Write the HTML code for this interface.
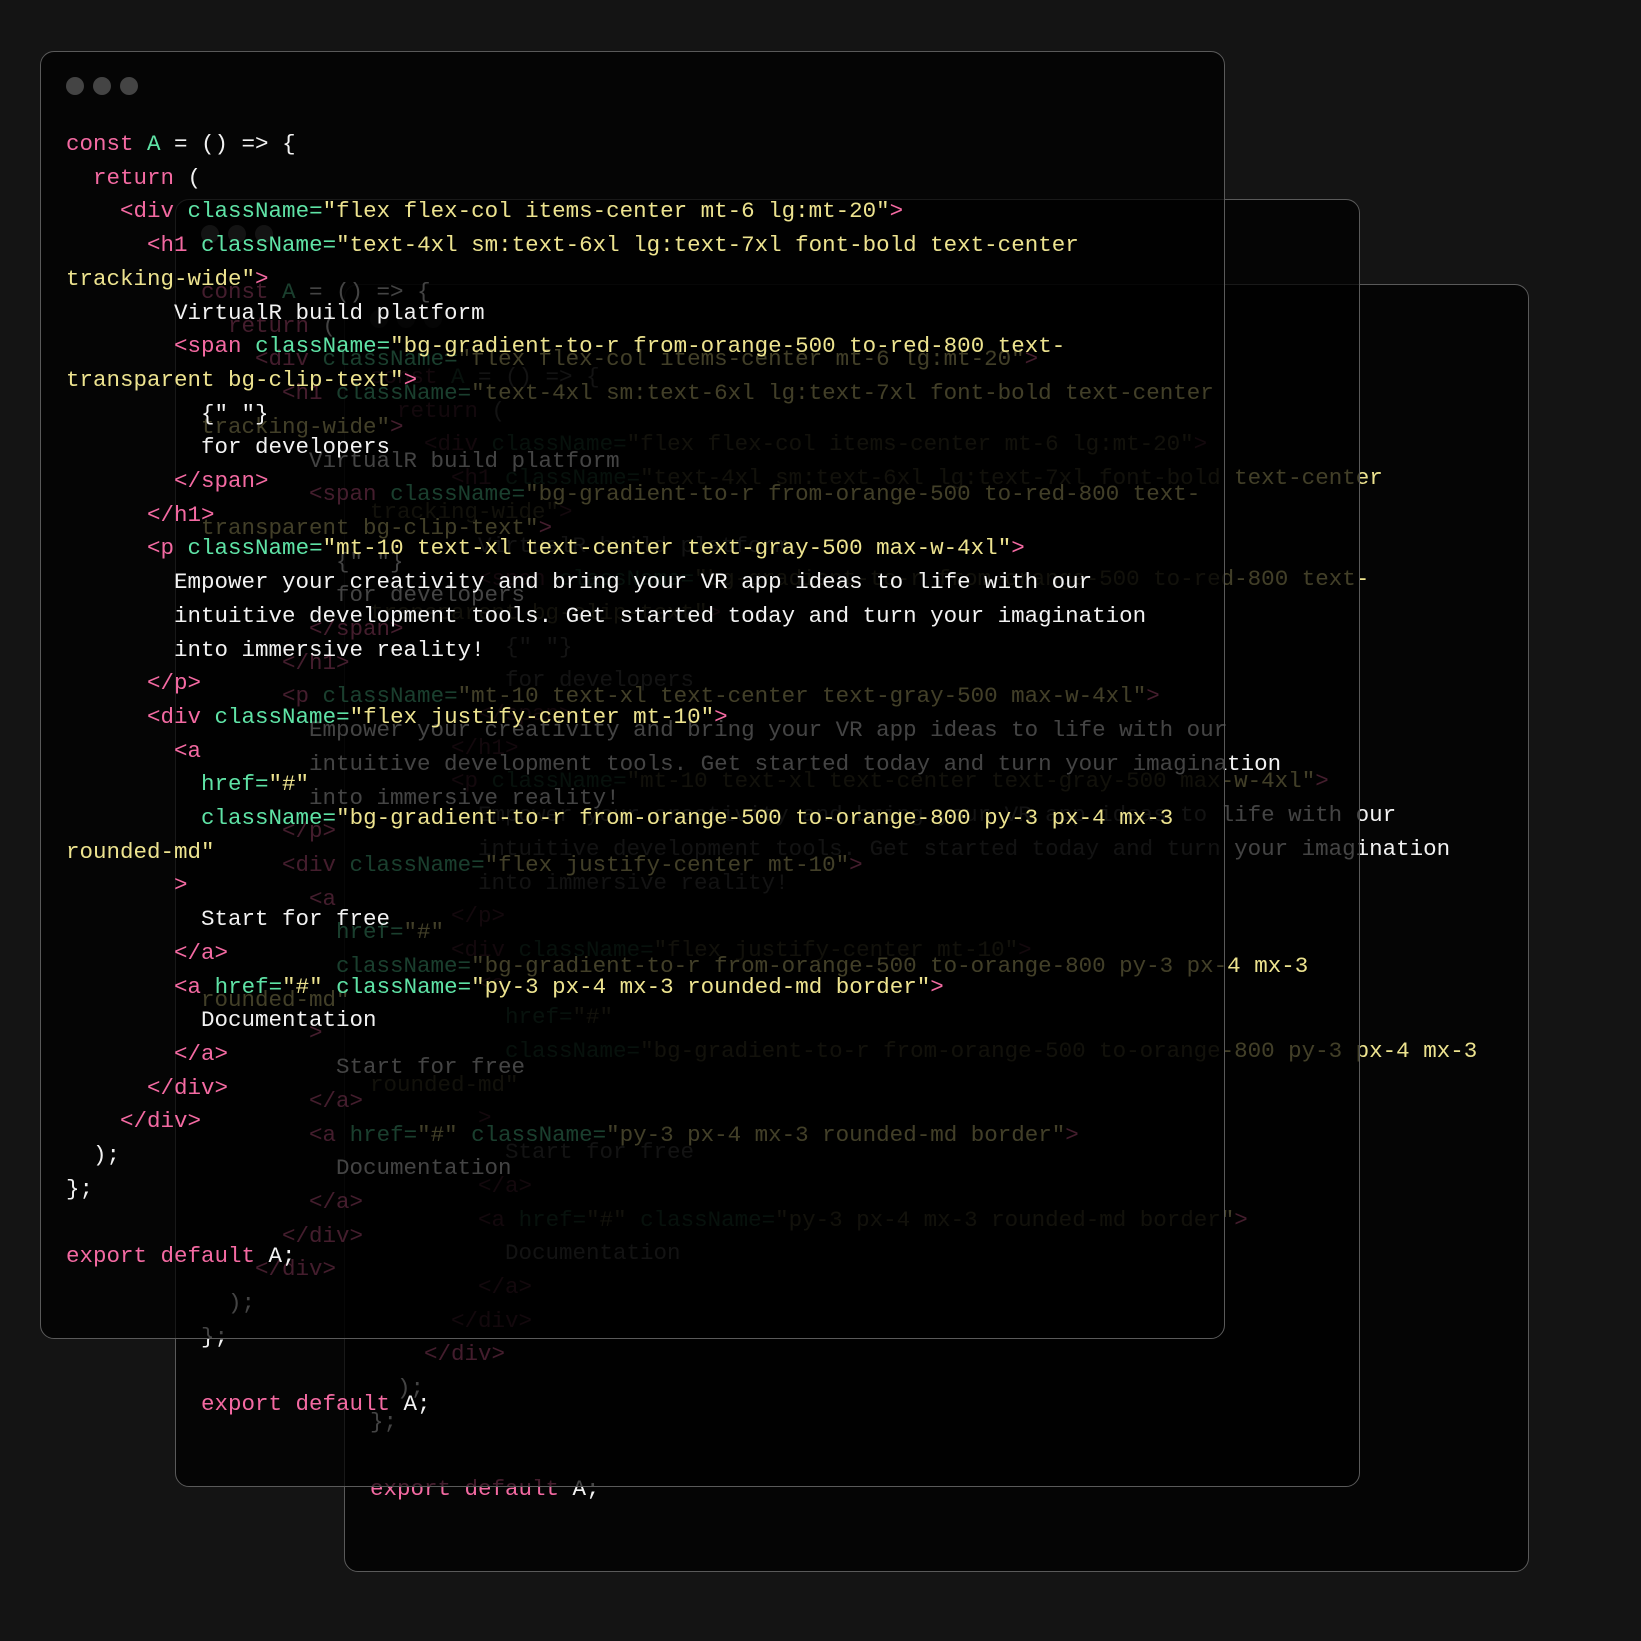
<!DOCTYPE html>
<html><head><meta charset="utf-8">
<style>
html,body{margin:0;padding:0;background:#141414;width:1641px;height:1641px;overflow:hidden;}
.w{position:absolute;width:1185px;height:1286px;border:1.5px solid #5a5a5a;border-radius:14px;background:rgba(0,0,0,0.72);box-sizing:border-box;}
.d{position:absolute;top:25px;width:18px;height:18px;border-radius:50%;background:#444;}
pre{position:absolute;left:25px;top:76px;margin:0;font-family:"Liberation Mono",monospace;font-size:22.5px;line-height:33.7px;color:#f2f2f2;white-space:pre;}
.k{color:#f46aa2}.g{color:#5fe3a6}.y{color:#ede38f}
</style></head><body>
<div class="w" style="left:344px;top:284px;height:1288px">
<div class="d" style="left:25px"></div><div class="d" style="left:52px"></div><div class="d" style="left:79px"></div>
<pre id="c3"></pre></div>
<div class="w" style="left:175px;top:199px;height:1288px">
<div class="d" style="left:25px"></div><div class="d" style="left:52px"></div><div class="d" style="left:79px"></div>
<pre id="c2"></pre></div>
<div class="w" style="left:40px;top:51px;height:1288px">
<div class="d" style="left:25px"></div><div class="d" style="left:52px"></div><div class="d" style="left:79px"></div>
<pre id="c1"><span class="k">const</span> <span class="g">A</span> = () =&gt; {
  <span class="k">return</span> (
    <span class="k">&lt;div</span> <span class="g">className=</span><span class="y">"flex flex-col items-center mt-6 lg:mt-20"</span><span class="k">&gt;</span>
      <span class="k">&lt;h1</span> <span class="g">className=</span><span class="y">"text-4xl sm:text-6xl lg:text-7xl font-bold text-center
tracking-wide"</span><span class="k">&gt;</span>
        VirtualR build platform
        <span class="k">&lt;span</span> <span class="g">className=</span><span class="y">"bg-gradient-to-r from-orange-500 to-red-800 text-
transparent bg-clip-text"</span><span class="k">&gt;</span>
          {" "}
          for developers
        <span class="k">&lt;/span&gt;</span>
      <span class="k">&lt;/h1&gt;</span>
      <span class="k">&lt;p</span> <span class="g">className=</span><span class="y">"mt-10 text-xl text-center text-gray-500 max-w-4xl"</span><span class="k">&gt;</span>
        Empower your creativity and bring your VR app ideas to life with our
        intuitive development tools. Get started today and turn your imagination
        into immersive reality!
      <span class="k">&lt;/p&gt;</span>
      <span class="k">&lt;div</span> <span class="g">className=</span><span class="y">"flex justify-center mt-10"</span><span class="k">&gt;</span>
        <span class="k">&lt;a</span>
          <span class="g">href=</span><span class="y">"#"</span>
          <span class="g">className=</span><span class="y">"bg-gradient-to-r from-orange-500 to-orange-800 py-3 px-4 mx-3
rounded-md"</span>
        <span class="k">&gt;</span>
          Start for free
        <span class="k">&lt;/a&gt;</span>
        <span class="k">&lt;a</span> <span class="g">href=</span><span class="y">"#"</span> <span class="g">className=</span><span class="y">"py-3 px-4 mx-3 rounded-md border"</span><span class="k">&gt;</span>
          Documentation
        <span class="k">&lt;/a&gt;</span>
      <span class="k">&lt;/div&gt;</span>
    <span class="k">&lt;/div&gt;</span>
  );
};

<span class="k">export</span> <span class="k">default</span> A;</pre></div>
<script>
var h=document.getElementById('c1').innerHTML;
document.getElementById('c2').innerHTML=h;
document.getElementById('c3').innerHTML=h;
</script>
</body></html>
